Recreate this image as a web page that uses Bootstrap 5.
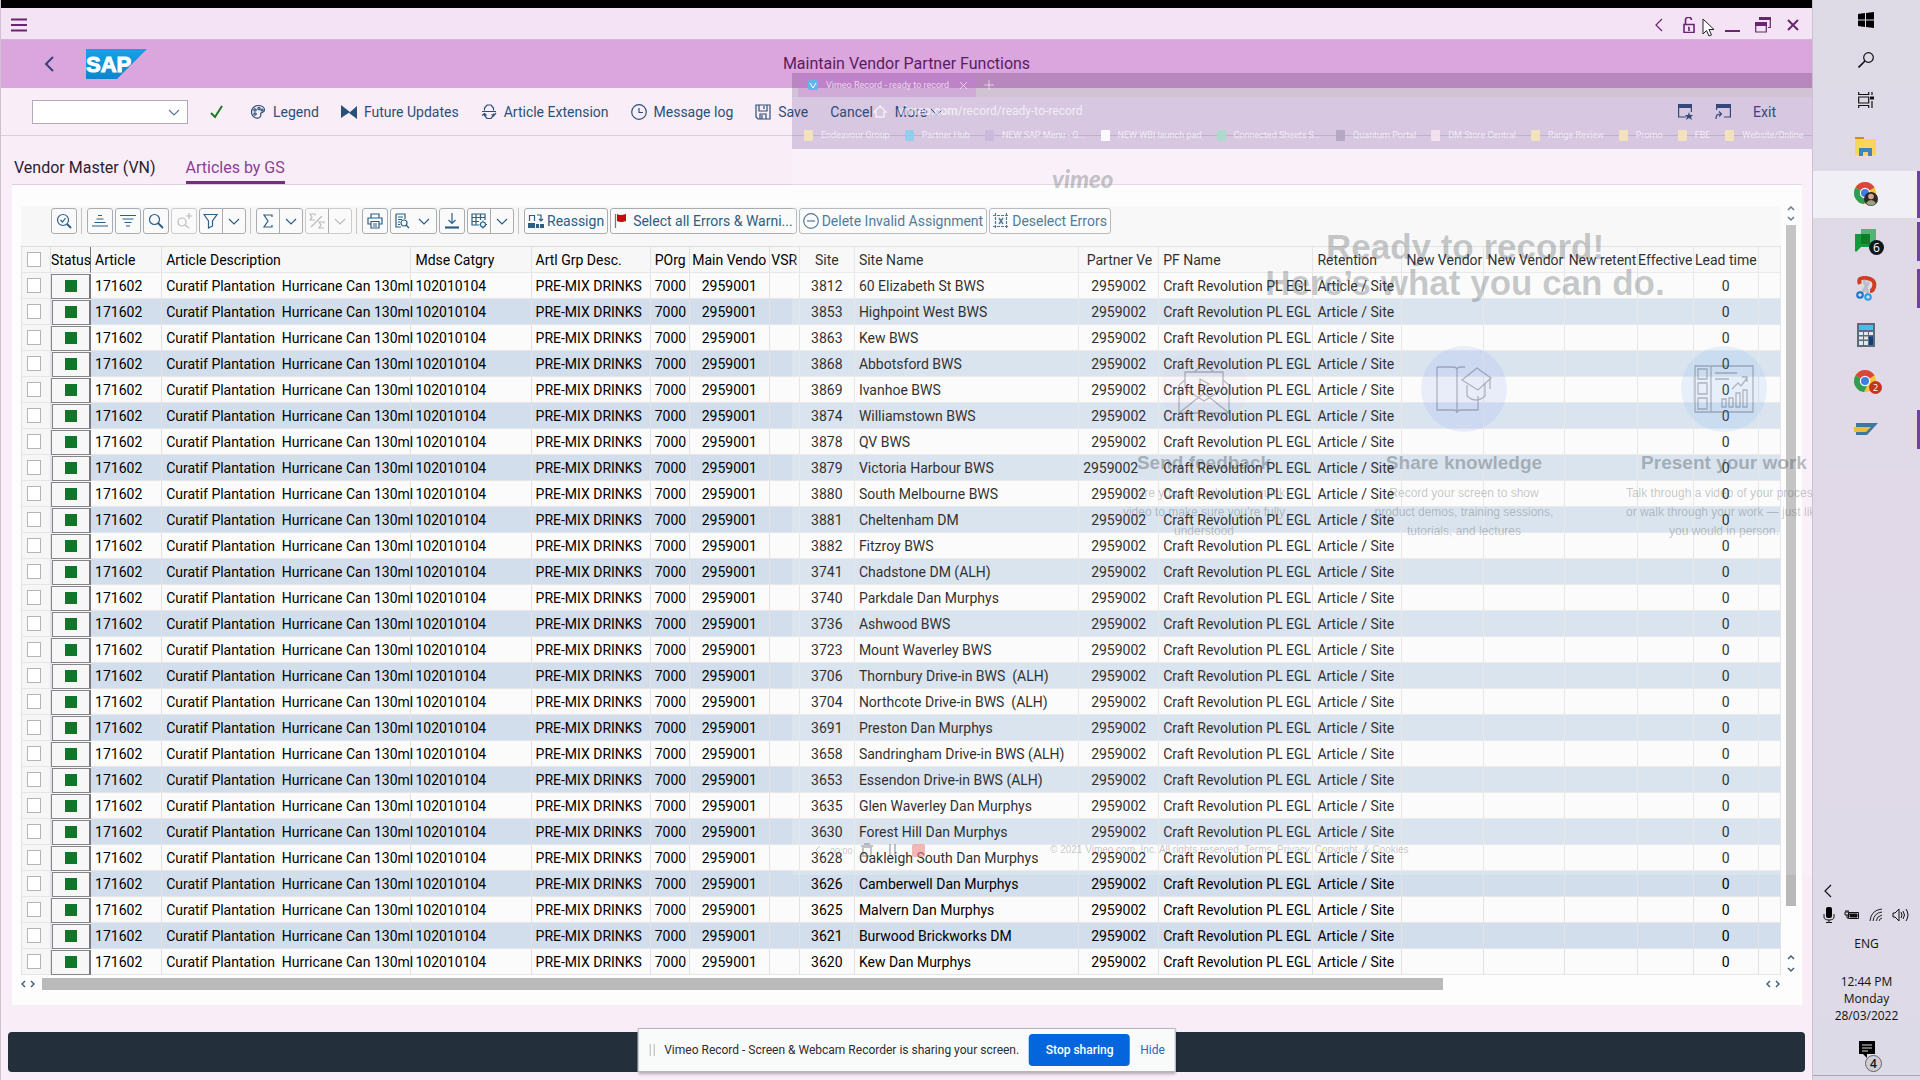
<!DOCTYPE html>
<html lang="en">
<head>
<meta charset="utf-8">
<meta name="viewport" content="width=device-width, initial-scale=1">
<title>Maintain Vendor Partner Functions</title>
<link href="https://cdn.jsdelivr.net/npm/bootstrap@5.3.0/dist/css/bootstrap.min.css" rel="stylesheet">
<style>
body{font-family:Roboto,"Liberation Sans",sans-serif;font-size:14px;line-height:20px;color:#000;background:#f9edf8;min-height:100vh;overflow-x:hidden}
button,select{font:inherit;color:inherit}
button{background:none;border:0;padding:0}
svg{display:block;flex:none}
.ico{width:16px;height:16px;fill:none;stroke:currentColor;stroke-width:1.2}
.ico .solid{fill:currentColor;stroke:none}
.shell{border-left:1px solid #cfc0d2;min-height:100vh;overflow:hidden}
.blackband{height:8px;background:#000}
.titlebar{height:32px;background:#f4e3f4;padding:2px 11px 0 10px;color:#6a2470;border-bottom:1px solid #cdb9d0}
.winbtns{gap:14px}
.winbtns .apart{margin-left:14px}
.apphead{height:48px;background:#dba5dd;color:#5a1c62}
.apphead .back{margin-left:43px;color:#3a3f7c}
.apphead .logo{margin-left:31px}
.apptitle{font-size:16px;font-weight:400;line-height:24px;margin:0}
.side{flex:1 1 0}
.cmdbar{height:48px;padding:0 36px 0 31px;gap:22px;color:#2b5078;border-bottom:1px solid #dccfe0}
.cmdbar button{gap:7px;height:28px}
.cmdbar .tight{gap:3px}
.cmdselect{width:156px;height:24px;border:1px solid #b3a9b8;background:#fff;border-radius:0;appearance:none}
.selwrap svg{right:5px;top:5px;pointer-events:none;color:#56789a}
.tabrow{height:48px;padding-left:13px;gap:30px;font-size:16px}
.tabrow a{color:#2c2030;text-decoration:none;border-bottom:3px solid transparent;padding-top:18px}
.tabrow a.active{color:#8a3f96;border-color:#752f7c}
.sheet{margin:0 10px 27px 11px;background:#fdfdfd;border-top:1px solid #ddd0df;padding:21px 6px 15px 9px}
.gridtools{height:41px;background:#f7f7f7;padding:2px 0 0 30px;gap:2px;color:#2b5f85;border-bottom:1px solid #ddd}
.gbtn{height:26px;width:26px;border:1px solid #a9adb1!important;border-radius:3px;background:#fafafa;white-space:nowrap}
.gbtn.wide{width:auto;gap:3px;padding:0 3px}
.gbtn.split{width:47px}
.gbtn.split span{width:22px;height:24px}
.gbtn.split.parted span+span{border-left:1px solid #a9adb1}
.gbtn.off{color:#b9bcc0;border-color:#c9cbcd!important}
.gsep{width:6px;height:26px}
.gsep::before{content:"";display:block;width:1px;height:26px;margin-left:2px;background:#c4c4c4}
.grid{table-layout:fixed;width:100%;border-collapse:separate;border-spacing:0}
.grid th,.grid td{height:26px;padding:0 0 0 4px;font-weight:400;white-space:pre;border-right:1px solid #e2e2e4;border-bottom:1px solid #e6e6ea;line-height:20px;background:#fbfbfb}
.grid th{background:#f7f7f7}
.grid tbody tr:nth-child(even) td{background:#d2deec}
.grid tr>*:first-child,.grid tbody tr:nth-child(even) td.plain,.grid td.plain{background:#f6f6f6;border-left:1px solid #e2e2e4}
.grid tr>*:first-child{padding:0}
.grid .c{text-align:center;padding:0}
.grid .r{text-align:right;padding-right:12px}
.grid th.r{padding-right:6px}
.grid td.nudge{padding-right:20px}
.grid td.plain.st{padding:0;border:0}
.stbox{height:25px;border:1px solid #85858a;border-right:2px solid #77777c;background:#f7f7f7}
.stbox i{width:12px;height:12px;background:#12752a}
.tick{appearance:none;display:block;width:14px;height:15px;margin:0 0 0 5px;border:1px solid #b5b5b8;background:#fff}
.grid th.stat{border-right-color:#777}
.vbar{width:12px;margin-left:5px;color:#44617a;padding-bottom:1px}
.vthumb{background:#b8b8b8;flex:none;height:681px}
.hbar{height:12px;margin-top:3px;color:#44617a;gap:7px}
.hthumb{height:12px;background:#bababa;width:calc(80% - 6px)}
.statusbar{height:40px;margin:0 7px 8px 7px;border-radius:4px;background:#232f3b}
.sharebar{bottom:8px;left:50%;transform:translateX(-50%);height:44px;background:#f9fbfa;border:1px solid #b5b5bb;box-shadow:0 2px 3px rgba(0,0,0,.3);font-size:12px;color:#2c2c30;padding:0 10px 0 11px;gap:10px;white-space:nowrap;z-index:5}
.sharebar .stop{background:#0465dc;color:#fff;font-weight:500;height:32px;width:101px;border-radius:4px}
.sharebar a{color:#2b67b6;text-decoration:none}
.grip{width:5px;height:12px;border:solid #b5b5b5;border-width:0 1px}
.ghost{left:791px;right:0;top:73px;height:802px;overflow:hidden;pointer-events:none;z-index:3;font-size:9px;line-height:16px;color:rgba(255,255,255,.7)}
.gstrip{height:24px;background:rgba(25,0,50,.18);padding-left:6px}
.gtab{width:178px;height:24px;padding:0 9px 0 10px;gap:8px;background:rgba(205,120,225,.3);border-radius:6px 6px 0 0}
.gtool{height:52px;background:rgba(80,52,133,.2)}
.gurl{height:28px;padding-left:81px;gap:11px;font-size:12px}
.gmarks{height:20px;padding-left:12px;gap:15px;white-space:nowrap;overflow:hidden}
.gmarks span{gap:8px;display:flex;align-items:center}
.gmarks i{width:9px;height:11px;background:#f6e6b8;border-radius:1px;opacity:.9}
.gpage{height:726px;background:rgba(255,255,255,.18);color:rgba(60,70,75,.3);font-family:"Liberation Sans",sans-serif;font-size:12px;line-height:19px}
.gvimeo{padding:14px 0 0 260px;font:italic 900 24px/32px Lato,sans-serif}
.ghead{font-size:35px;font-weight:700;line-height:36px;margin:34px 0 0 283px;width:780px;color:rgba(60,70,75,.28)}
.gcols{margin:45px 0 0 282px;width:780px}
.gcol{width:260px}
.gcirc{width:86px;height:86px;border-radius:50%;background:rgba(110,140,245,.12)}
.gcirc.faint{background:rgba(190,140,220,.05)}
.gcirc.sky{background:rgba(100,170,245,.13)}
.gcirc svg{fill:none;stroke:#445;stroke-width:1.3;opacity:.35}
.gcol h3{font-size:19px;line-height:24px;font-weight:700;margin:19px 0 9px;white-space:nowrap;color:rgba(60,70,75,.36)}
.gfoot{margin-top:299px;padding-left:22px;font-size:10px}
.gfoot span{margin-left:124px}
.cursor{left:1701px;top:18px;z-index:6}
.dock{width:108px;min-height:100vh;background:linear-gradient(#dedae6,#e1d9e8 50%,#dddae7);border-left:1px solid #c9c0d2;font:12px/17px "Open Sans","Noto Sans",sans-serif;color:#111;flex:none}
.dock .slot{height:40px;width:100%;padding-right:2px}
.dock .app{height:47px;width:100%;position:relative;padding:0 2px 2px 0}
.dock .run::after{content:"";position:absolute;right:0;top:4px;bottom:4px;width:3px;background:#6e41a8}
.dock .app.current{background:#f0eff5}
.dock .app.current::after{top:0;bottom:0}
.dock .badgelet{position:absolute;left:56px;top:22px;width:15px;height:15px;border-radius:50%;background:#12181f;color:#fff;line-height:15px;text-align:center}
.dock .badgelet.red{background:#c5341f;width:13px;height:13px;line-height:13px;font-size:9px}
.tray{gap:9px;padding-left:10px;margin:8px 0}
.more{margin-left:9px}
.lang{margin-top:4px}
.clock{margin-top:21px}
.notif{margin-top:16px;height:35px;position:relative}
.notif b{position:absolute;left:52px;top:15px;width:17px;height:17px;border-radius:50%;background:#cfccd6;border:1px solid #666;line-height:15px;text-align:center;font-weight:600}
.dockend{height:5px;border-top:1px solid #aaa4b6}
</style>
</head>
<body class="d-flex">
<main class="shell flex-grow-1 d-flex flex-column position-relative">
  <div class="blackband"></div>
  <div class="titlebar d-flex align-items-center">
    <button aria-label="Menu"><svg width="17" height="14"><path d="M0 1.500h16M0 7h16M0 12.500h16" stroke="currentColor" stroke-width="2"/></svg></button>
    <div class="winbtns ms-auto d-flex align-items-center">
      <button aria-label="Previous"><svg class="ico"><path d="M11 2 5 8l6 6"/></svg></button>
      <button aria-label="Unlock"><svg class="ico"><path d="M3 7.500h10v8H3zM4.500 7V3.500a3 3 0 0 1 6-.5M8 10v4M7 10.500h1" stroke-width="1.600"/></svg></button>
      <button aria-label="Minimize" class="apart"><svg class="ico"><path class="solid" d="M0 13h15v2H0z"/></svg></button>
      <button aria-label="Restore"><svg class="ico"><path class="solid" d="M4 0h12v3H4zM0 5h12v4H0z"/><path d="M.7 7v8h10.600V7M15.300 2v8.500H13"/></svg></button>
      <button aria-label="Close"><svg class="ico"><path d="m3 3 10 10M13 3 3 13" stroke-width="2"/></svg></button>
    </div>
  </div>

  <header class="apphead d-flex align-items-center">
    <div class="side d-flex align-items-center">
      <button class="back" aria-label="Back"><svg width="11" height="16" fill="none" stroke="currentColor" stroke-width="2"><path d="M9 1 2 8l7 7"/></svg></button>
      <svg class="logo" width="62" height="30" role="img" aria-label="SAP"><defs><linearGradient id="sap" x2="0" y2="1"><stop stop-color="#12a3e6"/><stop offset="1" stop-color="#0a86cc"/></linearGradient></defs><path d="M0 0h61L31 30H0z" fill="url(#sap)"/><text x="0" y="23" font-family="Liberation Sans,sans-serif" font-weight="700" font-size="22" fill="#fff" stroke="#fff">SAP</text></svg>
    </div>
    <h1 class="apptitle">Maintain Vendor Partner Functions</h1>
    <div class="side"></div>
  </header>

  <div class="cmdbar d-flex align-items-center">
    <div class="selwrap position-relative"><select class="cmdselect d-block" aria-label="Command"><option></option></select>
      <svg class="ico position-absolute"><path d="m2 5 5 5 5-5"/></svg></div>
    <button aria-label="Enter" class="d-flex align-items-center me-1"><svg width="14" height="14" fill="none" stroke="#187a1c" stroke-width="2"><path d="m1 8 4 4 7-11"/></svg></button>
    <button class="d-flex align-items-center"><svg class="ico"><path d="M8 1.500c4 0 6.500 2 6.500 4.500S12 8 11 9s.5 2-.5 3.500S8 14.500 6 14C3 13 1.500 11 1.500 8S4 1.500 8 1.500z"/><circle cx="5" cy="6" r="1.200"/><circle cx="9" cy="4.500" r="1.200"/><circle cx="5" cy="10" r="1.200"/><circle cx="12" cy="6" r="1"/></svg>Legend</button>
    <button class="d-flex align-items-center"><svg class="ico"><path class="solid" d="M0 1l9 7-9 6zM16 2v13L8 9z"/></svg>Future Updates</button>
    <button class="d-flex align-items-center"><svg class="ico"><path d="M3.500 6.500V4L6 1h4l2.500 3v2.500M1 7.500h14M3.500 9.500v2L6 14.500h4l2.500-3v-2M1 11.500l2.500-2 2 2M15 9l-2.500 3-2-1.500"/></svg>Article Extension</button>
    <button class="d-flex align-items-center"><svg class="ico"><circle cx="8" cy="8" r="7.300"/><path d="M8 4v4.500h4"/></svg>Message log</button>
    <button class="d-flex align-items-center"><svg class="ico"><path d="M1 1h14v14H3l-2-2zM4 1v6h8V1M5 15v-5h6v5M9 2v3M7 11v4"/></svg>Save</button>
    <button>Cancel</button>
    <button class="tight d-flex align-items-center">More<svg width="14" height="10" fill="none" stroke="currentColor"><path d="m1 2 6 6 6-6"/></svg></button>
    <button class="ms-auto d-flex align-items-center" aria-label="New window"><svg class="ico"><path class="solid" d="M1 0h14v4H1zM12 8l1 3h3l-2 2 1 3-3-2-3 2 1-3-2-2h3z"/><path d="M1.600 2v11H9M14.400 2v6"/></svg></button>
    <button class="d-flex align-items-center" aria-label="Shortcut"><svg class="ico"><path class="solid" d="M1 0h15v4H1z"/><path d="M1.600 2v4M15.400 2v11H9M1 15c0-4 1-5 5-5M4 7.500 6.500 10 4 12.500"/></svg></button>
    <button>Exit</button>
  </div>

  <nav class="tabrow d-flex"><a href="#" class="d-flex align-items-center">Vendor Master (VN)</a><a href="#" class="active d-flex align-items-center">Articles by GS</a></nav>

  <section class="sheet">
    <div class="d-flex">
      <div class="flex-grow-1">
        <div class="gridtools d-flex" id="tools"></div>
        <table class="grid">
          <colgroup id="cols"></colgroup>
          <thead><tr id="heads"></tr></thead>
          <tbody id="rows"></tbody>
        </table>
      </div>
      <div class="vbar d-flex flex-column align-items-center">
        <svg width="10" height="19" fill="none" stroke="currentColor" stroke-width="1.500"><path d="M2 4l3-3 3 3M2 11l3 3 3-3"/></svg>
        <div class="vthumb w-100"></div>
        <svg class="mt-auto" width="10" height="19" fill="none" stroke="currentColor" stroke-width="1.500"><path d="M2 4l3-3 3 3M2 13l3 3 3-3"/></svg>
      </div>
    </div>
    <div class="hbar d-flex align-items-center pe-3">
      <svg width="14" height="8" fill="none" stroke="currentColor" stroke-width="1.500"><path d="M4 1 1 4l3 3M10 1l3 3-3 3"/></svg>
      <div class="hthumb"></div>
      <svg class="ms-auto" width="14" height="8" fill="none" stroke="currentColor" stroke-width="1.500"><path d="M4 1 1 4l3 3M10 1l3 3-3 3"/></svg>
    </div>
  </section>

  <footer class="statusbar mt-auto"></footer>

  <div class="sharebar position-absolute d-flex align-items-center">
    <span class="grip"></span><span>Vimeo Record - Screen &amp; Webcam Recorder is sharing your screen.</span>
    <button class="stop">Stop sharing</button><a href="#">Hide</a>
  </div>

  <div class="ghost position-absolute">
    <div class="gstrip d-flex align-items-center">
      <div class="gtab d-flex align-items-center"><svg width="10" height="10"><rect width="10" height="10" rx="2" fill="#5fb6ea"/><path d="M2 3l3 5 3-5" fill="none" stroke="#fff"/></svg><span class="text-nowrap">Vimeo Record - ready to record</span><svg class="ms-auto" width="7" height="7" stroke="#fff" stroke-opacity=".6"><path d="M0 0l7 7M7 0 0 7"/></svg></div>
      <svg class="ms-2" width="10" height="10" fill="none" stroke="#fff" stroke-opacity=".6"><path d="M0 5h10M5 0v10"/></svg>
    </div>
    <div class="gtool">
      <div class="gurl d-flex align-items-center"><svg width="14" height="13" fill="none" stroke="#fff" stroke-opacity=".7" stroke-width="1.500"><path d="M1 7l6-6 6 6H11v5H3V7z"/></svg><span><b class="fw-semibold">vimeo.com</b>/record/ready-to-record</span></div>
      <div class="gmarks d-flex align-items-center"><span><i></i>Endeavour Group</span><span><i style="background:#8ecdf0"></i>Partner Hub</span><span><i style="background:#cbb8dc"></i>NEW SAP Menu - G...</span><span><i style="background:#fff"></i>NEW WBI launch pad</span><span><i style="background:#a9dcc8"></i>Connected Sheets S...</span><span><i style="background:#b3a4c0"></i>Quantum Portal</span><span><i style="background:#f5e4ee"></i>DM Store Central</span><span><i></i>Range Review</span><span><i></i>Promo</span><span><i></i>FBE</span><span><i></i>Website/Online</span><span><i></i>C</span></div>
    </div>
    <div class="gpage">
      <div class="gvimeo">vimeo</div>
      <div class="ghead text-center">Ready to record!<br>Here’s what you can do.</div>
      <div class="gcols d-flex text-center">
        <div class="gcol"><div class="gcirc faint mx-auto d-flex align-items-center justify-content-center"><svg width="52" height="52"><path d="M1 22v28h50V22M1 50l25-20 25 20M7 24V9h38v15M1 22l6-5M51 22l-6-5M7 26l19 12 19-12M16 9l10-8 10 8M22 16l9 5-9 5z"/></svg></div><h3>Send feedback</h3>Share your thoughts in a quick<br>video to make sure you’re fully<br>understood</div>
        <div class="gcol"><div class="gcirc mx-auto d-flex align-items-center justify-content-center"><svg width="56" height="50"><path d="M1 3h16q4 0 4 3 0-3 4-3h4M21 6v43q0-3-4-3H1V3M21 49q0-3 4-3h17V32M26 16l15-12 14 10-13 12zM31 21v11q9 8 18 0V20M54 14v11"/></svg></div><h3>Share knowledge</h3>Record your screen to show<br>product demos, training sessions,<br>tutorials, and lectures</div>
        <div class="gcol"><div class="gcirc sky mx-auto d-flex align-items-center justify-content-center"><svg width="60" height="48"><path d="M1 1h58v46H1zM17 1v46M4 4h9v10H4zM4 18h9v11H4zM4 33h9v11H4zM21 8h22M21 14h14M28 42v-8h4v8zM35 42V33h4v9zM42 42V28h4v14zM49 42V25h4v17zM38 24l6-6 3 3 6-8M48 12h5v5"/></svg></div><h3>Present your work</h3><span class="text-nowrap">Talk through a video of your process,</span><br><span class="text-nowrap">or walk through your work — just like</span><br>you would in person.</div>
      </div>
      <div class="gfoot d-flex align-items-center text-nowrap"><svg width="112" height="18"><path d="M6 5 2 9l4 4" fill="none" stroke="#667"  opacity=".4"/><path d="M47 5h12M50 3h6M49 6h8v9h-8zM76 3v12M81 3v12" fill="none" stroke="#556" stroke-width="2" opacity=".35"/><rect x="98" y="3" width="13" height="13" rx="2" fill="#e88" opacity=".6"/><text x="16" y="13" font-size="9" fill="#667" fill-opacity=".35">00:00</text></svg><span>© 2021 Vimeo.com, Inc. All rights reserved. Terms, Privacy, Copyright, &amp; Cookies</span></div>
    </div>
  </div>
  <svg class="cursor position-absolute" width="14" height="20"><path d="M1 1v15l3.500-3.500L7 18l2.500-1-2.500-5.500h5z" fill="#fff" stroke="#222"/></svg>
</main>

<aside class="dock d-flex flex-column align-items-center">
  <button class="slot d-flex align-items-center justify-content-center" aria-label="Start"><svg width="16" height="16"><path d="M0 2l7-1v6.500H0zM8 1l8-1v7.500H8zM0 8.500h7V15l-7-1zM8 8.500h8V16l-8-1z"/></svg></button>
  <button class="slot d-flex align-items-center justify-content-center" aria-label="Search"><svg class="ico"><circle cx="10.500" cy="5.500" r="4.800"/><path d="M7 9l-6.500 6.500" stroke-width="1.600"/></svg></button>
  <button class="slot d-flex align-items-center justify-content-center mb-1" aria-label="Task view"><svg class="ico"><path d="M.7 0v2.500h10V0M.7 16v-2.500h10V16M.7 5h10v6H.7zM14 0v3M14 9v7"/><path class="solid" d="M12 4.500h4v3h-4z"/></svg></button>
  <button class="app d-flex align-items-center justify-content-center" aria-label="Files"><svg width="23" height="19"><path d="M1 0h9v4H1z" fill="#c99418"/><path d="M1 2h21v16H1z" fill="#fbd55b"/><path d="M5 19v-8h13v8h-4v-4H9v4z" fill="#3c86b4"/></svg></button>
  <button class="app run current d-flex align-items-center justify-content-center" aria-label="Chrome"><svg width="24" height="24"><use href="#chr"/><circle cx="17" cy="17" r="7" fill="#2c2a28"/><circle cx="17" cy="14.500" r="2.800" fill="#d9a78c"/><path d="M12 21q5-6 10 0-5 5-10 0z" fill="#9aa183"/></svg></button>
  <button class="app run d-flex align-items-center justify-content-center" aria-label="Chat"><svg width="24" height="24"><path d="M7 0h15v15H7z" fill="#54b377"/><path d="M1 5h15v13H7l-5 5-1-1z" fill="#119a3e"/><path d="M7 5h9v10H7z" fill="#0a7d26"/></svg><span class="badgelet">6</span></button>
  <button class="app run d-flex align-items-center justify-content-center" aria-label="Snip"><svg width="22" height="26" fill="none"><path d="M5 9Q2 2 11 3q10 1 8 9-1 4-4 4" stroke="#d03d20" stroke-width="4"/><path d="M9 5l4 14M14 7l-7 11" stroke="#b9bec4" stroke-width="3"/><circle cx="5" cy="20" r="2.800" stroke="#1a72c6" stroke-width="2"/><circle cx="13" cy="22" r="2.800" stroke="#2b9be6" stroke-width="2"/></svg></button>
  <button class="app d-flex align-items-center justify-content-center" aria-label="Calculator"><svg width="18" height="24"><path d="M0 0h18v24H0z" fill="#5d6a77"/><path d="M2 2h14v5H2z" fill="#41c0ea"/><path d="M2 9h4v3H2zM7 9h4v3H7zM12 9h4v3h-4zM2 13.500h4v3H2zM7 13.500h4v3H7zM2 18h4v4H2zM7 18h4v4H7z" fill="#dfe6ec"/><path d="M12 13.500h4V22h-4z" fill="#123f7c"/></svg></button>
  <button class="app d-flex align-items-center justify-content-center" aria-label="Chrome, second profile"><svg width="24" height="24"><g id="chr"><circle cx="11" cy="11" r="11" fill="#fbc634"/><path d="M11 11 1.500 5.500A11 11 0 0 1 20.500 5.500z" fill="#d9473c"/><path d="M1.500 5.500A11 11 0 0 0 10 22l4-8-3-3z" fill="#2f9e55"/><circle cx="11" cy="11" r="5.200" fill="#fff"/><circle cx="11" cy="11" r="4" fill="#3f7de0"/></g></svg><span class="badgelet red">2</span></button>
  <button class="app run d-flex align-items-center justify-content-center" aria-label="SAP Logon"><svg width="24" height="12"><path d="M2 0h22L13 12H2z" fill="#3f77a3"/><path d="M0 4h17l-5 5H0z" fill="#f0bb3c"/></svg></button>

  <button class="more mt-auto align-self-start" aria-label="Show hidden icons"><svg class="ico"><path d="M9 2 3 8l6 6"/></svg></button>
  <div class="tray d-flex w-100 align-items-center">
    <svg width="12" height="16"><rect x="3" width="6" height="11" rx="2"/><path d="M1 7v3q0 3 5 3t5-3V7M6 13v3M3 15.500h6" fill="none" stroke="#111"/></svg>
    <svg width="16" height="16" fill="none" stroke="#111"><path d="M4.500 5.500h10v6h-10zM2 3v2M4 3v2M1 5h4v3H1zM3 8v3h1" /><path d="M6 7h7v3H6z" fill="#111"/></svg>
    <svg width="14" height="16" fill="none" stroke="#222"><path d="M1 14Q2 3 13 2M4 14Q5 6 13 5M7 14Q8 9 13 8M10 14q0-2 3-3"/></svg>
    <svg width="17" height="16" fill="none" stroke="#111"><path d="M1 6h2l4-4v12l-4-4H1zM9 5q2 3 0 6M11 4q3 4 0 8M14 2q4 6 0 12"/></svg>
  </div>
  <div class="lang">ENG</div>
  <div class="clock text-center">12:44 PM<br>Monday<br>28/03/2022</div>
  <button class="notif w-100" aria-label="Notifications"><svg class="mx-auto mb-3" width="18" height="18"><path d="M1 0h16v13H9v4l-4-4H1z"/><path d="M4 4h10M4 7h10M4 10h6" stroke="#ddd"/></svg><b>4</b></button>
  <div class="dockend w-100"></div>
</aside>

<script>
const ic = p => `<svg class="ico">${p}</svg>`;
const down = ic('<path d="m3 6 5 5 5-5"/>');
const sheetIcon = '<path d="M2 1h9v5M2 1v13h5M4 4h5M4 6.500h4M4 9h2M4 11.500h2"/><circle cx="10" cy="10" r="3"/><path d="m12 12 3 3"/>';
const tools = [
 ['b','Details','<circle cx="7" cy="7" r="5.500"/><path d="m11 11 4 4" stroke-width="2"/><path d="m4.500 7 2 2 3-4"/>'],'|',
 ['b','Sort ascending','<path d="M6 2.500h4M4.500 6h7M2.500 9.500h11M0 13h16"/>'],
 ['b','Sort descending','<path d="M6 13h4M4.500 9.500h7M2.500 6h11M0 2.500h16"/>'],
 ['b','Find','<circle cx="6.500" cy="6.500" r="5"/><path d="m10 10 5 5" stroke-width="1.800"/>'],
 ['o','Find next','<circle cx="6" cy="9" r="4"/><path d="m9 12 4 3M13 0v6M10 3h6"/>'],
 ['p','Filter','<path d="M1 1.500h13L9.500 8v5l-4 2V8z"/>'],'|',
 ['p','Total','<path d="M12 4V2H4l4 6-4 6h8v-2"/>'],
 ['po','Subtotals','<path d="M6 2.500V1H1l2 3-2 3h5M2 14 13 3M15 10.500V9h-5l2 3-2 3h5"/>'],'|',
 ['b','Print','<path d="M4 5V1h8v4M4 11H1V5h14v6h-3M4 8.500h8V15H4zM6 11h4M6 13h4"/>'],
 ['s','Views',sheetIcon],
 ['b','Export','<path d="M8 0v10M4.500 7 8 10.500 11.500 7"/><path d="M1 14.500h14" stroke-width="2.200"/>'],
 ['p','Layout','<path d="M8 12H1V1h13v6M1 4.500h13M1 8.500h7M5 1v11M9.500 1v6"/><circle cx="12" cy="11.500" r="2.500"/><path d="M12 7.500v1M12 14v1.500M8.500 11.500h1M14.500 11.500h1.500"/>'],'|',
 ['w','Reassign','<path d="M1.500 8V2.500h5V8M9 2h4v6M11 6l2 2 2-2"/><path class="solid" d="M0 10h7v5H0zM8 11h3v4H8zM12 11h4v4h-4z"/>'],
 ['w','Select all Errors & Warni...','<path d="M1.500 1v14" stroke="#777"/><path d="M3 1q3 2 9 0v7q-5 2-9 0z" fill="#c00d0d" stroke="none"/>'],
 ['w','Delete Invalid Assignment','<circle cx="8" cy="8" r="7.300"/><path d="M4 8h8"/>'],
 ['w','Deselect Errors','<path d="M2.500 0v16M13.500 0v16M0 2.500h16M0 13.500h16" stroke-dasharray="3 1"/><path d="m6 5 4 6M10 5l-4 6" stroke-width="1.500"/>']];
document.getElementById('tools').innerHTML = tools.map(t => {
  if (t === '|') return '<span class="gsep"></span>';
  const [k, n, p] = t, base = 'gbtn d-flex align-items-center ';
  if (k === 'w') return `<button class="${base}wide">${ic(p)}${n.replace('&','&amp;')}</button>`;
  if (/[ps]/.test(k)) return `<button class="${base}split ${k[0]==='p'?'parted':''} ${k.includes('o')?'off':''}" aria-label="${n}"><span class="d-flex align-items-center justify-content-center">${ic(p)}</span><span class="d-flex align-items-center justify-content-center">${down}</span></button>`;
  return `<button class="${base}justify-content-center ${k==='o'?'off':''}" aria-label="${n}">${ic(p)}</button>`;
}).join('');

const widths = [30,40,71,249,120,119,39,80,30,55,224,80,154,89,81,81,73,56,65,22];
document.getElementById('cols').innerHTML = widths.map(w => `<col style="width:${w}px">`).join('');
const heads = ['','Status','Article','Article Description','Mdse Catgry','Artl Grp Desc.','POrg','Main Vendo','VSR','Site','Site Name','Partner Ve','PF Name','Retention','New Vendor','New Vendor','New retent','Effective','Lead time',''];
const tick = l => `<input type="checkbox" class="tick" aria-label="${l}">`;
document.getElementById('heads').innerHTML = heads.map((h, i) =>
  `<th class="${i===1?'stat c':i===8||i===9||i===17||i===18||i===7?'c':i===11?'r':''}">${i ? h : tick('Select all rows')}</th>`).join('');
const sites = `3812 60 Elizabeth St BWS
3853 Highpoint West BWS
3863 Kew BWS
3868 Abbotsford BWS
3869 Ivanhoe BWS
3874 Williamstown BWS
3878 QV BWS
3879 Victoria Harbour BWS
3880 South Melbourne BWS
3881 Cheltenham DM
3882 Fitzroy BWS
3741 Chadstone DM (ALH)
3740 Parkdale Dan Murphys
3736 Ashwood BWS
3723 Mount Waverley BWS
3706 Thornbury Drive-in BWS  (ALH)
3704 Northcote Drive-in BWS  (ALH)
3691 Preston Dan Murphys
3658 Sandringham Drive-in BWS (ALH)
3653 Essendon Drive-in BWS (ALH)
3635 Glen Waverley Dan Murphys
3630 Forest Hill Dan Murphys
3628 Oakleigh South Dan Murphys
3626 Camberwell Dan Murphys
3625 Malvern Dan Murphys
3621 Burwood Brickworks DM
3620 Kew Dan Murphys`.split('\n');
document.getElementById('rows').innerHTML = sites.map(s => {
  const id = s.slice(0, 4), name = s.slice(5), e = '<td></td>';
  return `<tr><td class="plain">${tick('Select site ' + id)}</td><td class="plain st"><div class="stbox d-flex align-items-center justify-content-center"><i></i></div></td><td>171602</td><td>Curatif Plantation  Hurricane Can 130ml</td><td>102010104</td><td>PRE-MIX DRINKS</td><td>7000</td><td class="r">2959001</td>${e}<td class="c">${id}</td><td>${name}</td><td class="r ${id==='3879'?'nudge':''}">2959002</td><td>Craft Revolution PL EGL</td><td>Article / Site</td>${e}${e}${e}${e}<td class="c">0</td>${e}</tr>`;
}).join('');
</script>
<script src="https://cdn.jsdelivr.net/npm/bootstrap@5.3.0/dist/js/bootstrap.bundle.min.js"></script>
</body>
</html>
